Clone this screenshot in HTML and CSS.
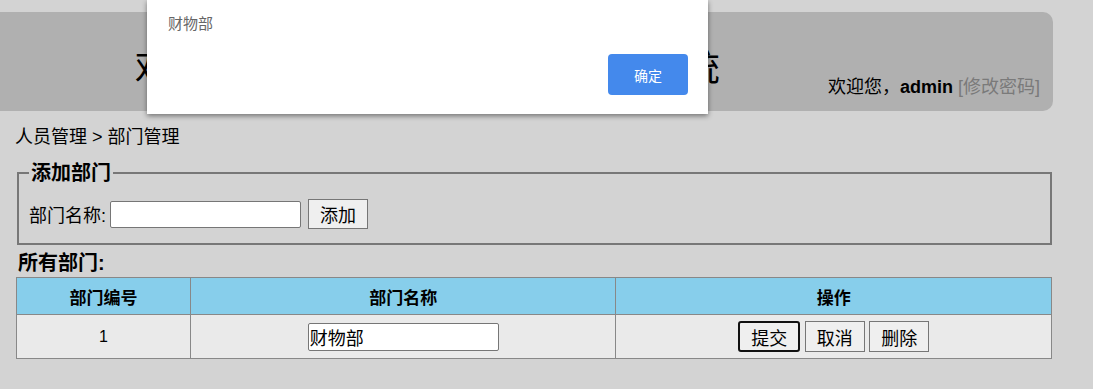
FILE: index.html
```html
<!DOCTYPE html>
<html lang="zh-CN">
<head>
  <meta charset="utf-8" />
  <title>部门管理</title>
  <link rel="stylesheet" href="styles.css">
</head>
<body>
<div class="banner">
  <h1 class="title">欢迎使用企业人事信息综合管理系统</h1>
  <div class="welcome">欢迎您，<b>admin</b> <a class="pwd" href="#">[修改密码]</a></div>
</div>

<div class="main">
  <div class="crumb">人员管理 &gt; 部门管理</div>

  <fieldset class="add-box">
    <legend>添加部门</legend>
    <label class="lbl">部门名称:</label><input class="txt" type="text"><button class="btn">添加</button>
  </fieldset>

  <h3 class="list-title">所有部门:</h3>
  <table class="grid">
    <colgroup>
      <col class="c-id"><col class="c-name"><col class="c-op">
    </colgroup>
    <tr class="head">
      <th>部门编号</th><th>部门名称</th><th>操作</th>
    </tr>
    <tr class="row">
      <td class="num">1</td>
      <td><input class="txt name" type="text" value="财物部"></td>
      <td><button class="btn focus">提交</button> <button class="btn">取消</button> <button class="btn">删除</button></td>
    </tr>
  </table>
</div>

<!-- alert() 弹窗 -->
<div class="alert">
  <div class="msg">财物部</div>
  <div class="alert-foot"><button class="ok">确定</button></div>
</div>
</body>
</html>
```

FILE: styles.css
```css
html,body{margin:0;height:100%;overflow:hidden;background:#d3d3d3;
  font-family:"Liberation Sans","Noto Sans CJK SC",sans-serif;color:#000}

.banner{margin-top:12px;width:1053px;height:99px;background:#b0b0b0;border-radius:0 10px 10px 0;
  display:flex;justify-content:space-between;box-sizing:border-box;padding:0 13px 0 135px}
.title{margin:0;align-self:center;font-size:36px;font-weight:normal;line-height:40px;padding-top:6px;
  letter-spacing:.6px;font-family:"Noto Sans CJK SC",sans-serif;white-space:nowrap}
.welcome{align-self:flex-end;font-size:18px;line-height:26px;margin-bottom:11px;white-space:nowrap}
.welcome b{font-weight:bold}
.pwd{color:#7a7a7a;text-decoration:none}

.main{width:1039px;padding-left:15px}
.crumb{font-size:18px;line-height:26px;margin-top:13px}

.add-box{margin:10px 2px 0;padding:13px 10px 14px;border:2px solid #777}
.add-box legend{font-size:20px;font-weight:bold;padding:0 2px;line-height:26px}
.lbl{font-size:18px;margin-right:4px;vertical-align:middle}
.txt{width:191px;height:27px;box-sizing:border-box;border:1px solid #767676;border-radius:2px;
  background:#fff;font:18px "Liberation Sans","Noto Sans CJK SC",sans-serif;padding:0 1px;vertical-align:middle}
.btn{height:31px;padding:0 11px;font:18px "Liberation Sans","Noto Sans CJK SC",sans-serif;
  background:#efefef;border:1px solid #767676;border-radius:0;color:#000;vertical-align:middle}
.add-box .btn{margin-left:7px;height:30px}

.list-title{margin:6px 0 2px 3px;font-size:20px;line-height:24px}

.grid{width:1036px;margin-left:1px;border-collapse:collapse;border:1px solid #888}
.c-id{width:174px}
.c-name{width:426px}
.c-op{width:436px}
.grid th,.grid td{border:1px solid #888;text-align:center;padding:0}
.head{background:#87ceeb;height:37px}
.head th{font-size:17px}
.row{background:#eaeaea;height:44px}
.num{font-size:16px}
.name{height:28px}
.btn.focus{border:2px solid #111;border-radius:3px}

.alert{position:absolute;left:147px;top:0;width:561px;height:114px;background:#fff;
  box-shadow:0 2px 5px rgba(0,0,0,.45);box-sizing:border-box;padding:12px 20px 19px;
  display:flex;flex-direction:column;justify-content:space-between;font-family:"Noto Sans CJK SC",sans-serif}
.msg{font-size:15px;color:#666;line-height:22px;margin-left:1px}
.alert-foot{display:flex;justify-content:flex-end}
.ok{width:80px;height:41px;border:0;border-radius:4px;background:#4489ec;color:#fff;
  font:14px "Noto Sans CJK SC",sans-serif}
```
